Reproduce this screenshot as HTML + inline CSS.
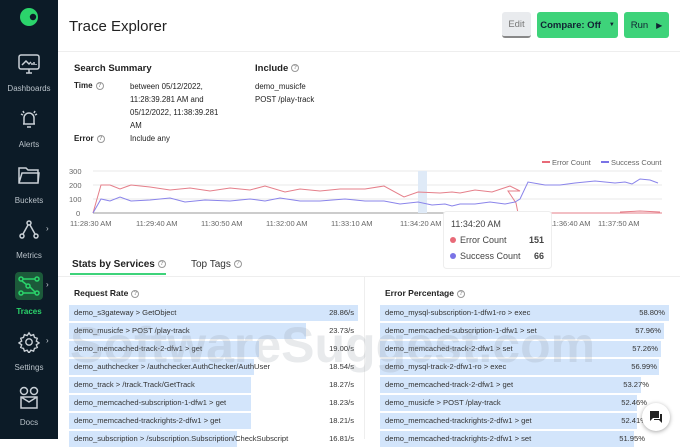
<!DOCTYPE html>
<html><head><meta charset="utf-8"><style>
*{box-sizing:border-box;margin:0;padding:0}
body{width:680px;height:439px;overflow:hidden;font-family:"Liberation Sans",sans-serif;background:#fff;position:relative;color:#222}
.sb{position:absolute;left:0;top:0;width:58px;height:439px;background:#0c1b27}
.sb .lbl{position:absolute;width:58px;text-align:center;font-size:8px;color:#b9c2c9}
.sb svg{position:absolute}
.main{position:absolute;left:58px;top:0;right:0;bottom:0}
.abs{position:absolute}
.btn{position:absolute;top:12px;height:26px;border-radius:3px;font-size:9.5px;display:flex;align-items:center;justify-content:center}
.hq{display:inline-block;width:8px;height:8px;border:1px solid #999;border-radius:50%;font-size:6px;line-height:6px;text-align:center;color:#999;vertical-align:middle;margin-left:3px}
.row{position:absolute;height:16px;font-size:7.6px;color:#333;line-height:16px}
.row .bar{position:absolute;left:0;top:0;height:16px;background:#d3e5fb}
.row .t{position:absolute;left:5px}
.row .v{position:absolute;text-align:right}
</style></head><body>
<div class="sb">
 <svg style="left:19px;top:7px" width="20" height="20" viewBox="0 0 20 20"><circle cx="10" cy="10" r="9" fill="#2bd46b"/><circle cx="14" cy="10" r="3.2" fill="#0c1b27"/></svg>
 <svg style="left:17px;top:52px" width="24" height="24" viewBox="0 0 24 24" fill="none" stroke="#c9d0d6" stroke-width="1.5"><rect x="2" y="3" width="20" height="14" rx="2"/><path d="M5 13l4-4 3 3 2-2M15 13v-2M17 13v-3M19 13v-1M9 21h6M12 17v4"/></svg>
 <div class="lbl" style="top:84px">Dashboards</div>
 <svg style="left:18px;top:108px" width="22" height="22" viewBox="0 0 22 22" fill="none" stroke="#c9d0d6" stroke-width="1.5"><path d="M6 16V10a5 5 0 0110 0v6H5h12M9 19h4M3 6l2 1M19 6l-2 1M5 3l1 2M17 3l-1 2"/></svg>
 <div class="lbl" style="top:140px">Alerts</div>
 <svg style="left:17px;top:164px" width="24" height="22" viewBox="0 0 24 22" fill="none" stroke="#c9d0d6" stroke-width="1.5"><path d="M2 4h7l2 2h10v13H2z M2 19l3-10h17l-1 10"/></svg>
 <div class="lbl" style="top:196px">Buckets</div>
 <svg style="left:18px;top:219px" width="22" height="22" viewBox="0 0 22 22" fill="none" stroke="#c9d0d6" stroke-width="1.5"><circle cx="11" cy="4" r="2"/><circle cx="4" cy="17" r="2"/><circle cx="18" cy="17" r="2"/><path d="M10 6L5 15M12 6l5 9"/></svg>
 <div class="abs" style="left:46px;top:224px;font-size:8px;color:#c9d0d6">›</div>
 <div class="lbl" style="top:251px">Metrics</div>
 <div class="abs" style="left:15px;top:272px;width:28px;height:28px;background:#1c5a3a;border-radius:4px"></div>
 <svg style="left:18px;top:276px" width="22" height="20" viewBox="0 0 22 20" fill="none" stroke="#2bd46b" stroke-width="1.5"><circle cx="3" cy="3" r="2"/><circle cx="19" cy="3" r="2"/><circle cx="10" cy="10" r="2"/><circle cx="3" cy="17" r="2"/><circle cx="19" cy="17" r="2"/><path d="M5 3h12M5 17h12M4 5l5 4M12 11l5 5"/></svg>
 <div class="abs" style="left:46px;top:280px;font-size:8px;color:#c9d0d6">›</div>
 <div class="lbl" style="top:307px;color:#2bd46b;font-weight:bold">Traces</div>
 <svg style="left:18px;top:331px" width="22" height="22" viewBox="0 0 24 24" fill="none" stroke="#c9d0d6" stroke-width="1.5"><circle cx="12" cy="12" r="3.5"/><path d="M12 2l2 3 3-1 1 3 3 1-1 3 3 2-3 2 1 3-3 1-1 3-3-1-2 3-2-3-3 1-1-3-3-1 1-3-3-2 3-2-1-3 3-1 1-3 3 1z"/></svg>
 <div class="abs" style="left:46px;top:336px;font-size:8px;color:#c9d0d6">›</div>
 <div class="lbl" style="top:363px">Settings</div>
 <svg style="left:18px;top:386px" width="22" height="24" viewBox="0 0 22 24" fill="none" stroke="#c9d0d6" stroke-width="1.5"><circle cx="6" cy="5" r="3.5"/><circle cx="16" cy="5" r="3.5"/><path d="M3 11h16v11H3zM3 11l8 5 8-5"/></svg>
 <div class="lbl" style="top:418px">Docs</div>
</div>
<div class="main">
 <div class="abs" style="left:11px;top:18px;font-size:15px;color:#222">Trace Explorer</div>
 <div class="btn" style="left:444px;width:29px;background:#e9ebee;color:#777;border-bottom:2px solid #888">Edit</div>
 <div class="btn" style="left:479px;width:81px;background:#3ed37a;color:#123;font-weight:600">Compare: Off &nbsp;&nbsp;<span style="font-size:6px">▼</span></div>
 <div class="btn" style="left:566px;width:45px;background:#3ed37a;color:#123">Run &nbsp;&nbsp;<span style="font-size:8px">▶</span></div>
 <div class="abs" style="left:0;top:51px;width:622px;border-top:1px solid #eee"></div>
 <div class="abs" style="left:16px;top:63px;font-size:9.5px;font-weight:bold">Search Summary</div>
 <div class="abs" style="left:16px;top:81px;font-size:8px;font-weight:bold">Time<span class="hq">?</span></div>
 <div class="abs" style="left:72px;top:80px;font-size:7.8px;line-height:13px;width:96px">between 05/12/2022, 11:28:39.281 AM and 05/12/2022, 11:38:39.281 AM</div>
 <div class="abs" style="left:16px;top:134px;font-size:8px;font-weight:bold">Error<span class="hq">?</span></div>
 <div class="abs" style="left:72px;top:134px;font-size:7.8px">Include any</div>
 <div class="abs" style="left:197px;top:63px;font-size:9.5px;font-weight:bold">Include<span class="hq">?</span></div>
 <div class="abs" style="left:197px;top:80px;font-size:7.8px;line-height:13px">demo_musicfe<br>POST /play-track</div>
</div>
<svg class="abs" style="left:0;top:0" width="680" height="439">
 <g font-family="Liberation Sans" font-size="7.5" fill="#666">
  <text x="69" y="174">300</text><text x="69" y="188">200</text><text x="69" y="202">100</text><text x="76" y="216">0</text>
  <g stroke="#e8e8e8"><line x1="93" y1="171" x2="662" y2="171"/><line x1="93" y1="185" x2="662" y2="185"/><line x1="93" y1="199" x2="662" y2="199"/></g>
  <line x1="93" y1="213" x2="662" y2="213" stroke="#999"/>
  <rect x="418" y="171" width="9" height="42" fill="#dfeaf7"/>
  <text x="70" y="226">11:28:30 AM</text><text x="136" y="226">11:29:40 AM</text><text x="201" y="226">11:30:50 AM</text><text x="266" y="226">11:32:00 AM</text><text x="331" y="226">11:33:10 AM</text><text x="400" y="226">11:34:20 AM</text><text x="549" y="226">11:36:40 AM</text><text x="598" y="226">11:37:50 AM</text>
  <rect x="542" y="161" width="8" height="2" fill="#e86a78"/><text x="552" y="165">Error Count</text>
  <rect x="601" y="161" width="8" height="2" fill="#7a73e6"/><text x="611" y="165">Success Count</text>
 </g>
 <polyline fill="none" stroke="#e57f8a" stroke-width="1" points="93,213 101,185 110,185 120,189 131,185 150,187 170,190 190,188 210,191 230,188 250,190 265,186 285,192 300,189 320,191 340,189 365,189 384,186 404,197 418,192 440,193 452,192 460,193 475,190 492,192 510,186 520,191 508,191 516,203 518,213 662,213"/>
 <polyline fill="none" stroke="#8a84ea" stroke-width="1" points="93,213 101,199 110,201 120,197 131,201 150,200 170,198 185,202 205,200 230,201 250,199 265,201 280,198 300,201 320,201 345,199 365,201 384,201 400,204 418,202 432,205 445,204 452,206 460,204 475,204 490,202 505,204 515,202 520,199 528,182 545,185 560,185 575,183 595,181 615,183 625,182 632,184 640,179 650,180 658,183"/>
 <polyline fill="none" stroke="#e57f8a" stroke-width="1" points="620,212 640,211 660,212"/>
 <rect x="443.5" y="211.5" width="108" height="57" rx="3" fill="#fff" stroke="#eee"/>
 <g font-family="Liberation Sans" font-size="9" fill="#444">
  <text x="451" y="227">11:34:20 AM</text>
  <circle cx="453" cy="240" r="3" fill="#e86a78"/><text x="460" y="243">Error Count</text><text x="544" y="243" text-anchor="end" font-weight="bold">151</text>
  <circle cx="453" cy="256" r="3" fill="#7a73e6"/><text x="460" y="259">Success Count</text><text x="544" y="259" text-anchor="end" font-weight="bold">66</text>
 </g>
</svg>
<div class="abs" style="left:72px;top:259px;font-size:10px;font-weight:bold">Stats by Services<span class="hq">?</span></div>
<div class="abs" style="left:191px;top:259px;font-size:10px;color:#333">Top Tags<span class="hq">?</span></div>
<div class="abs" style="left:70px;top:273px;width:96px;height:2px;background:#3ed37a"></div>
<div class="abs" style="left:58px;top:276px;width:622px;border-top:1px solid #eee"></div>
<div class="abs" style="left:364px;top:277px;height:162px;border-left:1px solid #eee"></div>
<div class="abs" style="left:74px;top:288px;font-size:8.5px;font-weight:bold">Request Rate<span class="hq">?</span></div>
<div class="abs" style="left:385px;top:288px;font-size:8.5px;font-weight:bold">Error Percentage<span class="hq">?</span></div>
<div class="row" style="left:69px;top:305px;width:289px"><div class="bar" style="width:289px"></div><span class="t">demo_s3gateway &gt; GetObject</span><span class="v" style="right:4px">28.86/s</span></div>
<div class="row" style="left:69px;top:323px;width:289px"><div class="bar" style="width:237px"></div><span class="t">demo_musicfe &gt; POST /play-track</span><span class="v" style="right:4px">23.73/s</span></div>
<div class="row" style="left:69px;top:341px;width:289px"><div class="bar" style="width:190px"></div><span class="t">demo_memcached-track-2-dfw1 &gt; get</span><span class="v" style="right:4px">19.00/s</span></div>
<div class="row" style="left:69px;top:359px;width:289px"><div class="bar" style="width:185px"></div><span class="t">demo_authchecker &gt; /authchecker.AuthChecker/AuthUser</span><span class="v" style="right:4px">18.54/s</span></div>
<div class="row" style="left:69px;top:377px;width:289px"><div class="bar" style="width:182px"></div><span class="t">demo_track &gt; /track.Track/GetTrack</span><span class="v" style="right:4px">18.27/s</span></div>
<div class="row" style="left:69px;top:395px;width:289px"><div class="bar" style="width:182px"></div><span class="t">demo_memcached-subscription-1-dfw1 &gt; get</span><span class="v" style="right:4px">18.23/s</span></div>
<div class="row" style="left:69px;top:413px;width:289px"><div class="bar" style="width:182px"></div><span class="t">demo_memcached-trackrights-2-dfw1 &gt; get</span><span class="v" style="right:4px">18.21/s</span></div>
<div class="row" style="left:69px;top:431px;width:289px"><div class="bar" style="width:168px"></div><span class="t">demo_subscription &gt; /subscription.Subscription/CheckSubscript</span><span class="v" style="right:4px">16.81/s</span></div>
<div class="row" style="left:380px;top:305px;width:289px"><div class="bar" style="width:289px"></div><span class="t">demo_mysql-subscription-1-dfw1-ro &gt; exec</span><span class="v" style="right:4px">58.80%</span></div>
<div class="row" style="left:380px;top:323px;width:289px"><div class="bar" style="width:284px"></div><span class="t">demo_memcached-subscription-1-dfw1 &gt; set</span><span class="v" style="right:8px">57.96%</span></div>
<div class="row" style="left:380px;top:341px;width:289px"><div class="bar" style="width:281px"></div><span class="t">demo_memcached-track-2-dfw1 &gt; set</span><span class="v" style="right:11px">57.26%</span></div>
<div class="row" style="left:380px;top:359px;width:289px"><div class="bar" style="width:279px"></div><span class="t">demo_mysql-track-2-dfw1-ro &gt; exec</span><span class="v" style="right:12px">56.99%</span></div>
<div class="row" style="left:380px;top:377px;width:289px"><div class="bar" style="width:261px"></div><span class="t">demo_memcached-track-2-dfw1 &gt; get</span><span class="v" style="right:20px">53.27%</span></div>
<div class="row" style="left:380px;top:395px;width:289px"><div class="bar" style="width:257px"></div><span class="t">demo_musicfe &gt; POST /play-track</span><span class="v" style="right:22px">52.46%</span></div>
<div class="row" style="left:380px;top:413px;width:289px"><div class="bar" style="width:257px"></div><span class="t">demo_memcached-trackrights-2-dfw1 &gt; get</span><span class="v" style="right:22px">52.41%</span></div>
<div class="row" style="left:380px;top:431px;width:289px"><div class="bar" style="width:254px"></div><span class="t">demo_memcached-trackrights-2-dfw1 &gt; set</span><span class="v" style="right:24px">51.95%</span></div>
<div class="abs" style="left:70px;top:316px;font-size:50px;font-weight:bold;color:rgba(150,160,170,0.22);white-space:nowrap">SoftwareSuggest.com</div>
<div class="abs" style="left:642px;top:403px;width:28px;height:28px;border-radius:50%;background:#fff;box-shadow:0 1px 4px rgba(0,0,0,.35)"></div>
<svg class="abs" style="left:649px;top:410px" width="14" height="14" viewBox="0 0 14 14"><path d="M1 1h9v7H4l-3 3z" fill="#222"/><path d="M11 4h2v9l-3-3H5V9h6z" fill="#222"/></svg>
</body></html>
